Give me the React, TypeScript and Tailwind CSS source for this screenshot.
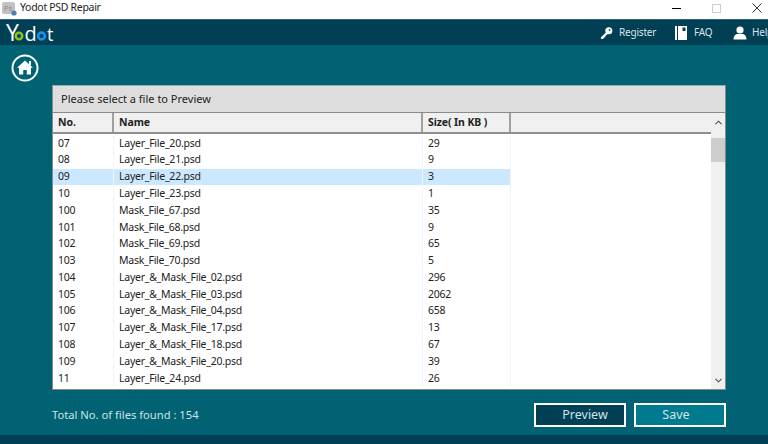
import { ChevronUp, ChevronDown } from 'lucide-react'

const rows = [
  ['07', 'Layer_File_20.psd', '29'],
  ['08', 'Layer_File_21.psd', '9'],
  ['09', 'Layer_File_22.psd', '3'],
  ['10', 'Layer_File_23.psd', '1'],
  ['100', 'Mask_File_67.psd', '35'],
  ['101', 'Mask_File_68.psd', '9'],
  ['102', 'Mask_File_69.psd', '65'],
  ['103', 'Mask_File_70.psd', '5'],
  ['104', 'Layer_&_Mask_File_02.psd', '296'],
  ['105', 'Layer_&_Mask_File_03.psd', '2062'],
  ['106', 'Layer_&_Mask_File_04.psd', '658'],
  ['107', 'Layer_&_Mask_File_17.psd', '13'],
  ['108', 'Layer_&_Mask_File_18.psd', '67'],
  ['109', 'Layer_&_Mask_File_20.psd', '39'],
  ['11', 'Layer_File_24.psd', '26'],
]

function AppIcon() {
  return (
    <svg width="18" height="16" viewBox="0 0 18 16" className="ml-[1px] mb-[2px]">
      <rect x="1" y="1" width="13" height="12" rx="2" fill="#c2c2c2" />
      <text x="3" y="9.5" fontSize="7" fill="#8a8a8a" fontFamily="'Liberation Sans', sans-serif">Ps</text>
      <circle cx="13" cy="12" r="2.6" fill="#4f7fb5" />
    </svg>
  )
}

function HomeIcon() {
  return (
    <svg width="28" height="28" viewBox="0 0 28 28">
      <circle cx="14" cy="14" r="12.5" fill="none" stroke="#fff" strokeWidth="2" />
      <path d="M14 6.5 L22 13.8 L20 13.8 L20 20.5 L15.8 20.5 L15.8 16 L12.2 16 L12.2 20.5 L8 20.5 L8 13.8 L6 13.8 Z" fill="#fff" />
      <rect x="18" y="7" width="2" height="4" fill="#fff" />
    </svg>
  )
}

function KeyIcon() {
  return (
    <svg width="13" height="14" viewBox="0 0 14 14">
      <circle cx="9.5" cy="4.5" r="3.8" fill="#fff" />
      <circle cx="10.3" cy="3.7" r="0.9" fill="#003f54" />
      <path d="M7 6 L1 11.5 L1 13.5 L3.5 13.5 L4 12 L5.5 11.5 L6 10 L8.5 8 Z" fill="#fff" />
    </svg>
  )
}

function BookIcon() {
  return (
    <svg width="12" height="14" viewBox="0 0 12 14">
      <rect x="0" y="0" width="2" height="14" fill="#fff" />
      <path d="M3 0 H12 V14 H3 Z M7.5 1.5 V5 H10.5 V1.5 Z" fill="#fff" fillRule="evenodd" />
    </svg>
  )
}

function UserIcon() {
  return (
    <svg width="14" height="14" viewBox="0 0 14 14">
      <circle cx="7" cy="4" r="3.6" fill="#fff" />
      <path d="M0.5 13.5 C0.5 9.5 3 8 4.5 8 H9.5 C11 8 13.5 9.5 13.5 13.5 Z" fill="#fff" />
    </svg>
  )
}

function Logo() {
  return (
    <svg width="50" height="25" viewBox="0 0 50 25" className="overflow-visible" fontFamily="'Open Sans', sans-serif">
      <text x="0" y="21" fontSize="23" fill="#fff">Y</text>
      <circle cx="13" cy="16" r="3.2" fill="none" stroke="#8dc21f" strokeWidth="2.6" />
      <text x="18.5" y="21" fontSize="20" fill="#fff">d</text>
      <circle cx="35.5" cy="16" r="3.4" fill="none" stroke="#1e90e8" strokeWidth="2.6" />
      <text x="41" y="21" fontSize="18" fill="#fff">t</text>
    </svg>
  )
}

export default function App() {
  return (
    <div className="w-[768px] h-[444px] overflow-hidden flex flex-col bg-[#006272] font-['Noto_Sans','Open_Sans',sans-serif]">
      {/* title bar */}
      <div className="h-[19px] bg-white flex items-center shrink-0">
        <AppIcon />
        <span className="ml-[1px] mb-[3px] text-[10.5px] tracking-[-0.3px] text-[#222]">Yodot PSD Repair</span>
        <div className="ml-auto flex items-center mb-[3px]">
          <span className="w-[9px] h-px bg-black mr-[31px]" />
          <span className="w-[9px] h-[9px] border border-[#ccc] mr-[31px]" />
          <svg width="10" height="10" viewBox="0 0 10 10" className="mr-[6px]">
            <path d="M0.5 0.5 L9.5 9.5 M9.5 0.5 L0.5 9.5" stroke="#333" strokeWidth="1" />
          </svg>
        </div>
      </div>

      {/* nav */}
      <div className="h-[26px] bg-[#003f54] border-t border-[#2f6475] flex items-center pl-[6px] shrink-0 overflow-hidden">
        <Logo />
        <div className="ml-auto flex items-center text-[10px] tracking-[-0.2px] text-[#d8e4e8] translate-x-[8px]">
          <KeyIcon />
          <span className="ml-[6px] mr-[19px] w-[37px]">Register</span>
          <BookIcon />
          <span className="ml-[7px] mr-[20px] w-[19px]">FAQ</span>
          <UserIcon />
          <span className="ml-[5px] w-[24px] overflow-hidden">Help</span>
        </div>
      </div>

      {/* main */}
      <div className="flex-1 flex flex-col">
        <div className="h-[40px] pl-[11px] pt-[9px]">
          <HomeIcon />
        </div>

        <div className="ml-[52px] w-[674px] h-[305px] flex flex-col bg-white border border-[#8a8a8a] border-t-[#9aa]">
          <div className="h-[27px] bg-[#dedede] border-b border-[#8a8a8a] flex items-center pl-[8px] text-[11px] text-[#222] shrink-0">
            Please select a file to Preview
          </div>
          <div className="flex-1 flex min-h-0">
            <div className="flex-1 min-w-0 overflow-hidden">
              <div className="h-[21px] mb-[1px] flex bg-[#f0f0f0] border-b-2 border-[#8f8f8f] text-[10.5px] tracking-[-0.1px] font-bold text-[#222] leading-[18px]">
                <div className="w-[61px] pl-[5px] border-r-2 border-[#a0a0a0]">No.</div>
                <div className="w-[309px] pl-[5px] border-r-2 border-[#a0a0a0]">Name</div>
                <div className="w-[88px] pl-[5px] border-r-2 border-[#a0a0a0]">Size( In KB )</div>
              </div>
              {rows.map((r, i) => (
                <div
                  key={r[0]}
                  className={
                    i === 2
                      ? 'w-[458px] h-[16.8px] flex items-center bg-[#cce8ff] text-[10.5px] tracking-[-0.25px] text-[#222]'
                      : 'w-[458px] h-[16.8px] flex items-center text-[10.5px] tracking-[-0.25px] text-[#222]'
                  }
                >
                  <div className="w-[61px] h-full flex items-center pl-[5px] border-r border-[#eef5fc]">{r[0]}</div>
                  <div className="w-[309px] h-full flex items-center pl-[5px] border-r border-[#eef5fc]">{r[1]}</div>
                  <div className="w-[88px] h-full flex items-center pl-[5px] border-r border-[#eef5fc]">{r[2]}</div>
                </div>
              ))}
            </div>
            <div className="w-[14px] bg-[#f0f0f0] flex flex-col shrink-0">
              <div className="h-[18px] flex items-center justify-center">
                <ChevronUp size={11} strokeWidth={2.5} color="#555" />
              </div>
              <div className="h-[24px] mt-[7px] bg-[#cdcdcd]" />
              <div className="flex-1" />
              <div className="h-[18px] flex items-center justify-center">
                <ChevronDown size={11} strokeWidth={2.5} color="#555" />
              </div>
            </div>
          </div>
        </div>

        <div className="flex-1 flex items-center pl-[52px] pr-[42px] pt-[5px]">
          <span className="text-[11.2px] text-[#cfe3e8]">Total No. of files found : 154</span>
          <button className="ml-auto w-[92px] h-[24px] pl-[10px] bg-[#003f54] border-2 border-white text-[12.5px] text-[#cfe3e8]">
            Preview
          </button>
          <button className="ml-[8px] w-[92px] h-[24px] pr-[8px] bg-[#007a8e] border-2 border-white text-[12.5px] text-[#cfe3e8]">
            Save
          </button>
        </div>
      </div>

      {/* footer */}
      <div className="h-[9px] bg-[#003f54] shrink-0" />
    </div>
  )
}
